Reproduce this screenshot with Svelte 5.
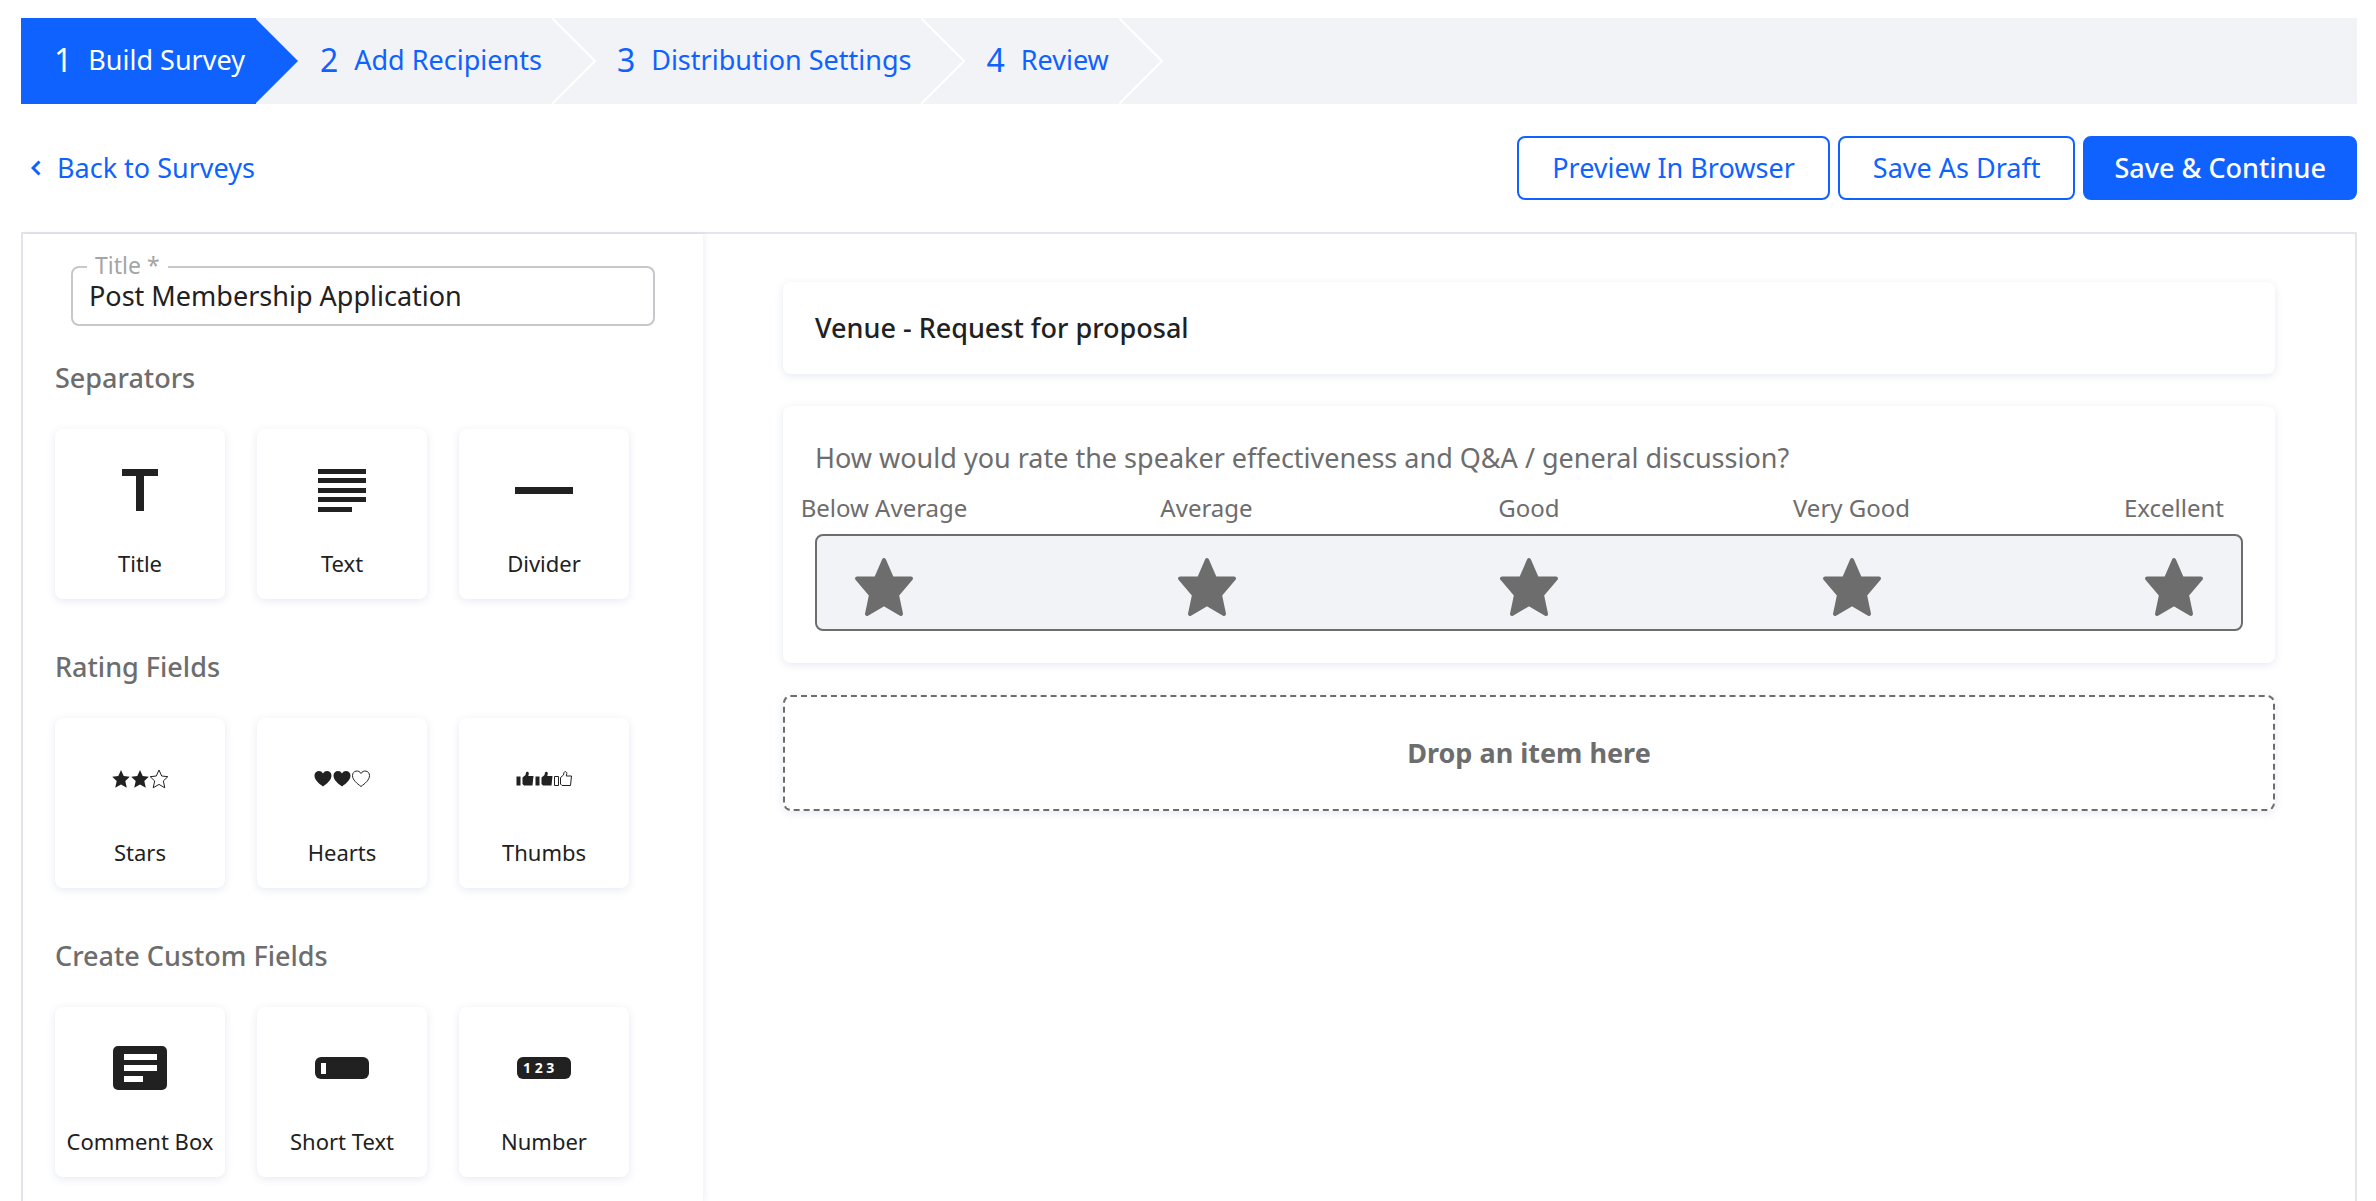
<script lang="ts">
    type Step = { number: number; label: string };

    const steps: Step[] = [
        { number: 1, label: 'Build Survey' },
        { number: 2, label: 'Add Recipients' },
        { number: 3, label: 'Distribution Settings' },
        { number: 4, label: 'Review' },
    ];

    const groups = [
        { title: 'Separators', fields: ['Title', 'Text', 'Divider'] },
        { title: 'Rating Fields', fields: ['Stars', 'Hearts', 'Thumbs'] },
        { title: 'Create Custom Fields', fields: ['Comment Box', 'Short Text', 'Number'] },
    ];

    const ratings = ['Below Average', 'Average', 'Good', 'Very Good', 'Excellent'];

    const star = 'M9 0 L11.7 6 L17.8 6.7 L13.3 11 L14.8 17.8 L9 14.4 L3.2 17.8 L4.7 11 L0.2 6.7 L6.3 6 Z';
    const heart = 'M9 16.5 C5 13.5 0.5 10 0.5 5.5 C0.5 0.5 7 -0.5 9 3.5 C11 -0.5 17.5 0.5 17.5 5.5 C17.5 10 13 13.5 9 16.5 Z';
    const thumb = 'M0.5 6.5 H4.5 V15.5 H0.5 Z M6.5 14 V7.5 L9.5 5 L10 2.5 C10.5 1 13 1.5 12.8 3.5 L12.3 6 H17.5 L16.5 15.5 H8 Z';
    const glyphs: Record<string, string> = { Stars: star, Hearts: heart, Thumbs: thumb };

    let title = $state('Post Membership Application');
    let current = $state(1);
    let rating = $state(0);
</script>

<div class="page">
    <nav class="steps">
        {#each steps as step}
            <button class="step" class:active={step.number === current} onclick={() => (current = step.number)}>
                <span class="number">{step.number}</span>
                <span>{step.label}</span>
                <svg class="arrow" viewBox="0 0 44 86" preserveAspectRatio="none">
                    <path d="M0 0 L43 43 L0 86" />
                </svg>
            </button>
        {/each}
    </nav>

    <div class="toolbar">
        <a class="back" href="#surveys">
            <svg width="10" height="16" viewBox="0 0 10 16"><path d="M8.5 1.5 L2 8 L8.5 14.5" /></svg>
            Back to Surveys
        </a>
        <div class="actions">
            <button class="outline">Preview In Browser</button>
            <button class="outline">Save As Draft</button>
            <button class="primary">Save &amp; Continue</button>
        </div>
    </div>

    <div class="builder">
        <aside>
            <div class="title-field">
                <label for="survey-title">Title *</label>
                <input id="survey-title" type="text" bind:value={title} />
            </div>

            {#each groups as group}
                <h2>{group.title}</h2>
                <div class="fields">
                    {#each group.fields as field}
                        <button class="field">
                            <svg width="60" height="60" viewBox="0 0 60 60">
                                {#if field === 'Title'}
                                    <path d="M12 9 H48 V16 H34 V51 H26 V16 H12 Z" />
                                {:else if field === 'Text'}
                                    <path d="M6 9 H54 V14 H6 Z M6 18 H54 V23 H6 Z M6 28 H54 V33 H6 Z M6 37 H54 V42 H6 Z M6 47 H40 V52 H6 Z" />
                                {:else if field === 'Divider'}
                                    <path d="M1 27 H59 V34 H1 Z" />
                                {:else if field === 'Comment Box'}
                                    <rect x="3" y="8" width="54" height="44" rx="5" />
                                    <path class="cut" d="M14 16 H47 V22 H14 Z M14 27 H47 V33 H14 Z M14 38 H33 V44 H14 Z" />
                                {:else if field === 'Short Text'}
                                    <rect x="3" y="19" width="54" height="22" rx="6" />
                                    <path class="cut" d="M9 25 H14 V36 H9 Z" />
                                {:else if field === 'Number'}
                                    <rect x="3" y="19" width="54" height="22" rx="6" />
                                    <text class="cut" x="9" y="35">1 2 3</text>
                                {:else}
                                    <g transform="translate(2 21)"><path d={glyphs[field]} /></g>
                                    <g transform="translate(21 21)"><path d={glyphs[field]} /></g>
                                    <g transform="translate(40 21)"><path class="hollow" d={glyphs[field]} /></g>
                                {/if}
                            </svg>
                            <span>{field}</span>
                        </button>
                    {/each}
                </div>
            {/each}
        </aside>

        <main>
            <section class="card">
                <h1>Venue - Request for proposal</h1>
            </section>

            <section class="card question">
                <p>How would you rate the speaker effectiveness and Q&amp;A / general discussion?</p>
                <div class="labels">
                    {#each ratings as label}
                        <span>{label}</span>
                    {/each}
                </div>
                <div class="stars">
                    {#each ratings as label, i}
                        <button aria-label={label} class:chosen={i < rating} onclick={() => (rating = i + 1)}>
                            <svg width="60" height="60" viewBox="0 0 60 60">
                                <path d="M30 3 L38 21.5 H57 L43 38 L47 57 L30 47 L13 57 L17 38 L3 21.5 H22 Z" />
                            </svg>
                        </button>
                    {/each}
                </div>
            </section>

            <div class="drop">Drop an item here</div>
        </main>
    </div>
</div>

<style>
    :global(body) {
        margin: 0;
        background: #fff;
    }

    .page {
        display: flex;
        flex-direction: column;
        box-sizing: border-box;
        height: 100vh;
        padding: 18px 19px 0 21px;
        overflow: hidden;
        color: #212121;
        font-family: "Noto Sans", sans-serif;
        font-size: 27px;
        line-height: 36px;
    }

    button {
        font: inherit;
        cursor: pointer;
    }

    .steps {
        display: flex;
        flex: none;
        background: #f2f3f7;
    }

    .step {
        position: relative;
        display: flex;
        align-items: center;
        gap: 16px;
        height: 86px;
        padding: 0 54px 2px 21px;
        border: none;
        background: none;
        color: #0f62fe;
        white-space: nowrap;
    }

    .step:first-child {
        padding-left: 33px;
    }

    .number {
        font-size: 32px;
    }

    .arrow {
        position: absolute;
        top: 0;
        right: 0;
        width: 44px;
        height: 86px;
        fill: #f2f3f7;
        stroke: #fff;
        stroke-width: 2;
    }

    .step.active {
        background: linear-gradient(#0f62fe, #0f62fe) no-repeat 0 0 / calc(100% - 43px) 100%;
        color: #fff;
    }

    .active .arrow {
        fill: #0f62fe;
        stroke: none;
    }

    .step span {
        position: relative;
        z-index: 1;
    }

    .toolbar {
        display: flex;
        flex: none;
        justify-content: space-between;
        align-items: center;
        padding: 32px 0;
    }

    .back {
        display: flex;
        align-items: center;
        gap: 16px;
        padding-left: 10px;
        color: #0f62fe;
        text-decoration: none;
    }

    .back path {
        fill: none;
        stroke: #0f62fe;
        stroke-width: 3;
    }

    .actions {
        display: flex;
        gap: 8px;
    }

    .actions button {
        height: 64px;
        padding: 0 33px;
        border: 2px solid #0f62fe;
        border-radius: 8px;
    }

    .outline {
        background: #fff;
        color: #0f62fe;
    }

    .actions .primary {
        padding: 0 29px;
        background: #0f62fe;
        color: #fff;
        font-weight: 500;
    }

    .builder {
        display: flex;
        flex: 1;
        min-height: 0;
        border: 2px solid #e5e6eb;
        border-bottom: none;
    }

    aside {
        flex: none;
        box-sizing: border-box;
        width: 680px;
        padding: 32px 48px 0 32px;
        box-shadow: 2px 0 6px rgba(60, 70, 140, 0.08);
    }

    .title-field {
        position: relative;
        margin-left: 16px;
    }

    .title-field label {
        position: absolute;
        top: -17px;
        left: 16px;
        padding: 0 8px;
        background: #fff;
        color: #a5a5a5;
        font-size: 23px;
        line-height: 32px;
    }

    .title-field input {
        box-sizing: border-box;
        width: 100%;
        height: 60px;
        padding: 0 16px 1px;
        border: 2px solid #c8c8cc;
        border-radius: 8px;
        background: #fff;
        color: #212121;
        font: inherit;
    }

    h1,
    h2,
    p {
        margin: 0;
        font-size: 27px;
        line-height: 36px;
    }

    h2 {
        margin-top: 34px;
        color: #6d6d6d;
        font-weight: 500;
    }

    .fields {
        display: flex;
        gap: 32px;
        padding-top: 33px;
    }

    .fields + h2 {
        margin-top: 50px;
    }

    .field {
        display: flex;
        flex-direction: column;
        align-items: center;
        gap: 28px;
        width: 170px;
        height: 170px;
        padding: 31px 0 0;
        border: none;
        border-radius: 8px;
        background: #fff;
        box-shadow: 0 2px 8px rgba(60, 70, 140, 0.12);
        color: #212121;
        font-size: 22px;
        line-height: 30px;
        white-space: nowrap;
    }

    .field svg {
        flex: none;
        fill: #212121;
    }

    .field .cut {
        fill: #fff;
        font-size: 14px;
        font-weight: 700;
    }

    .field .hollow {
        fill: none;
        stroke: #212121;
        stroke-width: 1;
    }

    main {
        flex: 1;
        display: flex;
        flex-direction: column;
        gap: 32px;
        min-width: 0;
        padding: 48px 80px 0;
    }

    .card,
    .drop {
        border-radius: 8px;
        box-shadow: 0 2px 8px rgba(60, 70, 140, 0.12);
    }

    .card {
        padding: 28px 32px;
    }

    h1 {
        font-weight: 500;
    }

    .question {
        padding: 34px 32px 32px;
        color: #6d6d6d;
    }

    .labels,
    .stars {
        display: flex;
        justify-content: space-between;
    }

    .labels {
        padding: 16px 0 10px;
        font-size: 24px;
        line-height: 32px;
    }

    .labels span {
        display: flex;
        justify-content: center;
        width: 138px;
        white-space: nowrap;
    }

    .stars {
        box-sizing: border-box;
        height: 97px;
        border: 2px solid #6d6d6d;
        border-radius: 8px;
        background: #f2f3f7;
    }

    .stars button {
        width: 134px;
        padding: 17px 0 0;
        border: none;
        background: none;
    }

    .stars path {
        fill: #6d6d6d;
        stroke: #6d6d6d;
        stroke-width: 4;
        stroke-linejoin: round;
    }

    .stars .chosen path {
        fill: #0f62fe;
        stroke: #0f62fe;
    }

    .drop {
        padding: 38px 0;
        border: 2px dashed #6d6d6d;
        color: #6d6d6d;
        font-weight: 700;
        text-align: center;
    }
</style>
